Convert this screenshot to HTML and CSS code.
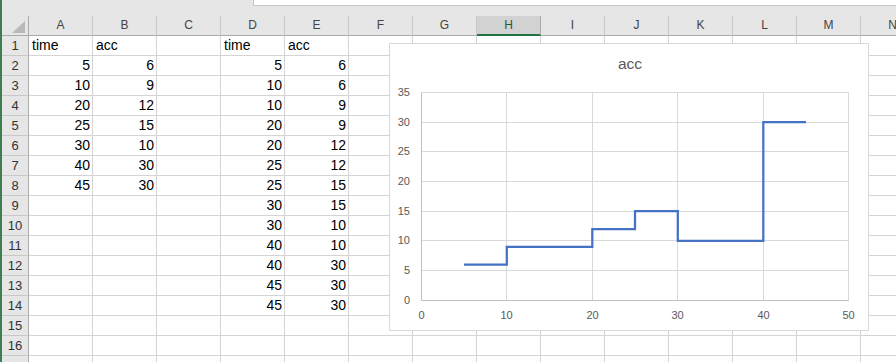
FILE: index.html
```html
<!DOCTYPE html>
<html lang="en">
<head>
<meta charset="UTF-8">
<meta name="viewport" content="width=device-width, initial-scale=1.0">
<title>Sheet with step chart</title>
<link rel="stylesheet" href="styles.css">
</head>
<body>

<div class="frame">
    <div class="topbar"><div class="formula"></div></div>
    <div class="sheet" id="sheet"></div>

    <div class="chart">
        <svg width="480" height="288" viewBox="0 0 480 288">
            <rect class="chart-bg" x="0.5" y="0.5" width="479" height="287"/>
            <text class="chart-title" x="241" y="26">acc</text>
            <g class="grid">
                <line x1="32.5" y1="49.5" x2="459.5" y2="49.5"/>
                <line x1="32.5" y1="79.5" x2="459.5" y2="79.5"/>
                <line x1="32.5" y1="108.5" x2="459.5" y2="108.5"/>
                <line x1="32.5" y1="138.5" x2="459.5" y2="138.5"/>
                <line x1="32.5" y1="168.5" x2="459.5" y2="168.5"/>
                <line x1="32.5" y1="197.5" x2="459.5" y2="197.5"/>
                <line x1="32.5" y1="227.5" x2="459.5" y2="227.5"/>
                <line x1="117.5" y1="49.5" x2="117.5" y2="257.5"/>
                <line x1="203.5" y1="49.5" x2="203.5" y2="257.5"/>
                <line x1="288.5" y1="49.5" x2="288.5" y2="257.5"/>
                <line x1="374.5" y1="49.5" x2="374.5" y2="257.5"/>
                <line x1="459.5" y1="49.5" x2="459.5" y2="257.5"/>
            </g>
            <g class="axis">
                <line x1="32.5" y1="49.5" x2="32.5" y2="257.5"/>
                <line x1="32.5" y1="257.5" x2="459.5" y2="257.5"/>
            </g>
            <g class="ylabels">
                <text x="21" y="53">35</text>
                <text x="21" y="83">30</text>
                <text x="21" y="112">25</text>
                <text x="21" y="142">20</text>
                <text x="21" y="172">15</text>
                <text x="21" y="201">10</text>
                <text x="21" y="231">5</text>
                <text x="21" y="261">0</text>
            </g>
            <g class="xlabels">
                <text x="32.5" y="276">0</text>
                <text x="117.5" y="276">10</text>
                <text x="203.5" y="276">20</text>
                <text x="288.5" y="276">30</text>
                <text x="374.5" y="276">40</text>
                <text x="459.5" y="276">50</text>
            </g>
            <polyline class="series" points="75,221.6 117.8,221.6 117.8,203.8 203.3,203.8 203.3,186 246,186 246,168.2 288.8,168.2 288.8,197.9 374.3,197.9 374.3,79 417,79"/>
        </svg>
    </div>
</div>

<script>
    // Column letters and cell values
    var cols = ['A','B','C','D','E','F','G','H','I','J','K','L','M','N'];
    var ab = [[5,6],[10,9],[20,12],[25,15],[30,10],[40,30],[45,30]];
    var de = [[5,6],[10,6],[10,9],[20,9],[20,12],[25,12],[25,15],[30,15],[30,10],[40,10],[40,30],[45,30],[45,30]];

    var sheet = document.getElementById('sheet');

    function addCell(cls, text) {
        var div = document.createElement('div');
        div.className = cls;
        if (text !== undefined) div.textContent = text;
        sheet.appendChild(div);
        return div;
    }

    // Header row
    var corner = addCell('corner');
    corner.appendChild(document.createElement('span')).className = 'corner-mark';
    for (var c = 0; c < cols.length; c++) {
        addCell(cols[c] === 'H' ? 'col-head selected' : 'col-head', cols[c]);
    }

    // Body rows (row 17 only peeks in at the bottom edge, so no number)
    for (var r = 1; r <= 17; r++) {
        addCell('row-head', r < 17 ? r : '');
        for (var c = 0; c < cols.length; c++) {
            var value = '';
            var cls = 'cell';
            if (r === 1) {
                if (c === 0 || c === 3) value = 'time';
                if (c === 1 || c === 4) value = 'acc';
            } else {
                if (c < 2 && ab[r - 2]) { value = ab[r - 2][c]; cls += ' num'; }
                if ((c === 3 || c === 4) && de[r - 2]) { value = de[r - 2][c - 3]; cls += ' num'; }
            }
            addCell(cls, value);
        }
    }
</script>

</body>
</html>
```

FILE: styles.css
```css
body {
    margin: 0;
    background-color: #fff;
    font-family: "Liberation Sans", Arial, sans-serif;
    overflow: hidden;
}
.frame {
    position: relative;
    height: 362px;
    overflow: hidden;
    border-left: 2px solid #3d7d50;
}
.topbar {
    height: 16px;
    background-color: #e6e6e6;
}
.formula {
    margin-left: 251px;
    height: 5px;
    background-color: #fff;
    border-left: 1px solid #c6c6c6;
    border-bottom: 1px solid #c6c6c6;
}
.sheet {
    display: grid;
    grid-template-columns: 27px repeat(14, 64px);
    grid-auto-rows: 20px;
}
.sheet > div {
    box-sizing: border-box;
    white-space: nowrap;
    overflow: hidden;
}
.corner {
    background-color: #e6e6e6;
    border-right: 1px solid #ababab;
    border-bottom: 1px solid #ababab;
    display: flex;
    justify-content: flex-end;
    align-items: flex-end;
    padding: 0 3px 2px 0;
}
.corner-mark {
    width: 0;
    height: 0;
    border-left: 13px solid transparent;
    border-bottom: 12px solid #b9b9b9;
}
.col-head {
    background-color: #e6e6e6;
    border-right: 1px solid #c8c8c8;
    border-bottom: 1px solid #ababab;
    text-align: center;
    font-size: 12px;
    line-height: 19px;
    color: #444;
}
.col-head.selected {
    background-color: #d2d2d2;
    border-right-color: #ababab;
    border-bottom: 2px solid #217346;
    line-height: 18px;
    color: #1f5a36;
}
.row-head {
    background-color: #e6e6e6;
    border-right: 1px solid #ababab;
    border-bottom: 1px solid #c8c8c8;
    text-align: center;
    font-size: 13px;
    line-height: 19px;
    color: #333;
}
.cell {
    border-right: 1px solid #d4d4d4;
    border-bottom: 1px solid #d4d4d4;
    font-size: 14px;
    line-height: 19px;
    padding: 0 3px;
    color: #000;
}
.cell.num {
    text-align: right;
    padding-right: 2px;
}
.chart {
    position: absolute;
    left: 387px;
    top: 43px;
    width: 480px;
    height: 288px;
}
.chart svg {
    display: block;
    font-family: "Liberation Sans", Arial, sans-serif;
}
.chart-bg {
    fill: #fff;
    stroke: #d9d9d9;
}
.chart-title {
    font-size: 15.5px;
    fill: #595959;
    text-anchor: middle;
}
.grid line {
    stroke: #d9d9d9;
    stroke-width: 1;
}
.axis line {
    stroke: #bfbfbf;
    stroke-width: 1;
}
.ylabels text {
    font-size: 11px;
    fill: #595959;
    text-anchor: end;
}
.xlabels text {
    font-size: 11px;
    fill: #595959;
    text-anchor: middle;
}
.series {
    fill: none;
    stroke: #4472c4;
    stroke-width: 2.25;
}
```
